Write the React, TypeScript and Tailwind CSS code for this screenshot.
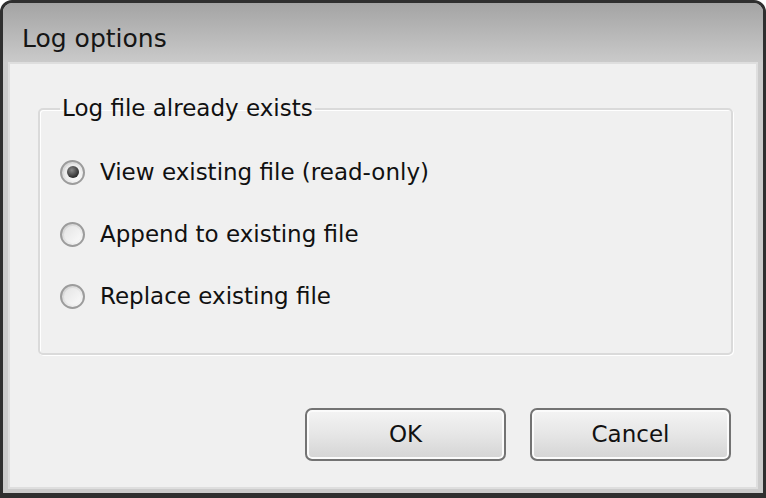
import React from 'react'

const Radio = ({ checked, label }: { checked?: boolean; label: string }) => (
  <label className='flex items-center gap-[15px] h-[30px]'>
    <span className='w-[25px] h-[25px] rounded-full border-[2px] border-[#9c9c9c] bg-gradient-to-br from-[#cfcfcf] to-[#fbfbfb] flex items-center justify-center'>
      <span className='w-[17px] h-[17px] rounded-full bg-gradient-to-br from-[#e4e4e4] to-[#fafafa] flex items-center justify-center'>
        {checked && (
          <span className='w-[12px] h-[12px] rounded-full bg-[radial-gradient(circle_at_40%_35%,#8a8a8a,#2e2e2e_70%)]' />
        )}
      </span>
    </span>
    <span className='text-[23px] text-[#111]'>{label}</span>
  </label>
)

const Button = ({ children }: { children: React.ReactNode }) => (
  <button className='w-[201px] h-[53px] rounded-[7px] border-[2px] border-[#737373] bg-gradient-to-b from-[#f4f4f4] via-[#e6e6e6] to-[#d4d4d4] shadow-[inset_0_0_0_2px_#fbfbfb] text-[23px] text-[#111]'>
    {children}
  </button>
)

export default function App() {
  return (
    <div
      className='w-[766px] h-[498px] bg-white'
      style={{ fontFamily: '"DejaVu Sans", Tahoma, sans-serif' }}
    >
      <div className='w-full h-full flex flex-col rounded-t-[12px] border-[3px] border-b-[5px] border-[#2f2f2f] bg-[#cbcbcb] overflow-hidden'>
        <div className='h-[59px] flex items-start px-[19px] pt-[23px] text-[25px] leading-none text-[#151515] bg-gradient-to-b from-[#a4a4a4] to-[#cacaca]'>
          Log options
        </div>
        <div className='flex-1 mx-[5px] mb-[4px] border-[2px] border-[#dedede] bg-[#f0f0f0] flex flex-col pl-[28px] pr-[23px] pt-[33px] pb-[26px]'>
          <fieldset className='h-[258px] border-[2px] border-[#dadada] rounded-[5px] px-[20px] pt-[37px] flex flex-col gap-[32px] shadow-[inset_1px_1px_0_#ffffff,1px_1px_0_#ffffff]'>
            <legend className='px-[2px] text-[23px] text-[#111] leading-none'>Log file already exists</legend>
            <Radio checked label='View existing file (read-only)' />
            <Radio label='Append to existing file' />
            <Radio label='Replace existing file' />
          </fieldset>
          <div className='mt-auto mr-[2px] flex justify-end gap-[24px]'>
            <Button>OK</Button>
            <Button>Cancel</Button>
          </div>
        </div>
      </div>
    </div>
  )
}
